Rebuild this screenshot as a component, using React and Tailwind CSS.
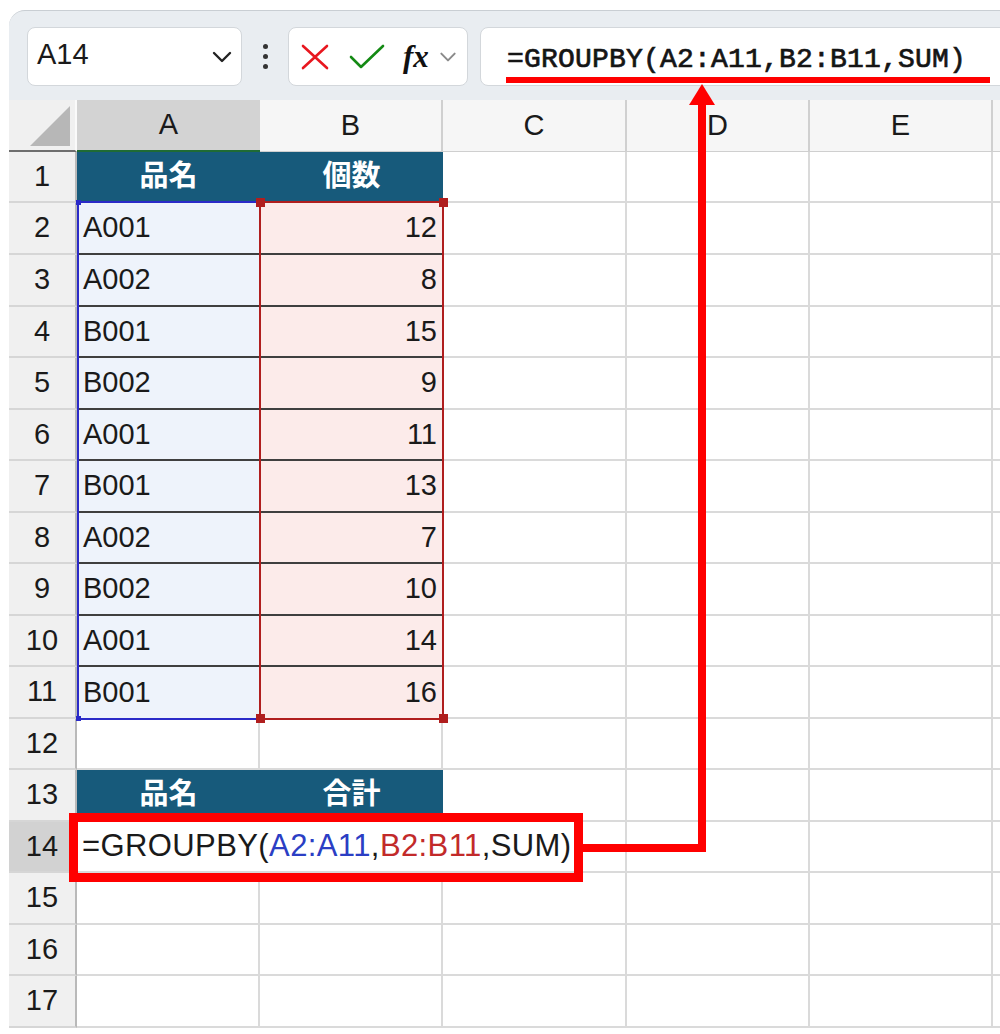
import React from 'react';

const COLS = ['A', 'B', 'C', 'D', 'E'];
const COL_W = [183, 183, 184, 183, 183];
const ROW_H = [51, 52, 52, 51, 52, 51, 52, 51, 52, 51, 52, 51, 52, 51, 52, 51, 52];

const DATA = [
  ['A001', '12'],
  ['A002', '8'],
  ['B001', '15'],
  ['B002', '9'],
  ['A001', '11'],
  ['B001', '13'],
  ['A002', '7'],
  ['B002', '10'],
  ['A001', '14'],
  ['B001', '16'],
];

const SANS = "font-['Liberation_Sans','Noto_Sans_CJK_JP',sans-serif]";

function Chevron({ className }) {
  return (
    <svg viewBox="0 0 20 12" className={className} fill="none" stroke="currentColor" strokeWidth="2.4" strokeLinecap="round" strokeLinejoin="round">
      <path d="M2 2 L10 10 L18 2" />
    </svg>
  );
}

function Toolbar() {
  return (
    <div className="ml-[9px] mt-[10px] h-[90px] bg-[#e9edf1] border-t border-[#c9ced3] rounded-tl-[16px] flex items-start pt-[16px]">
      {/* name box */}
      <div className="ml-[18px] w-[215px] h-[59px] bg-white border border-[#d3d7db] rounded-[8px] flex items-center justify-between pl-[9px] pr-[9px]">
        <span className="text-[29px] text-[#1a1a1a] leading-none -mt-[4px]">A14</span>
        <Chevron className="w-[20px] h-[12px] text-[#222]" />
      </div>
      {/* dots */}
      <div className="w-[46px] h-[59px] flex flex-col items-center justify-center gap-[5px]">
        <span className="w-[5px] h-[5px] rounded-full bg-[#333]" />
        <span className="w-[5px] h-[5px] rounded-full bg-[#333]" />
        <span className="w-[5px] h-[5px] rounded-full bg-[#333]" />
      </div>
      {/* cancel / enter / fx */}
      <div className="w-[180px] h-[59px] bg-white border border-[#d3d7db] rounded-[8px] flex items-center pl-[12px]">
        <svg viewBox="0 0 28 26" className="w-[28px] h-[26px]" stroke="#e8171f" strokeWidth="2.6" strokeLinecap="round">
          <path d="M2 2 L26 24 M26 2 L2 24" />
        </svg>
        <svg viewBox="0 0 36 26" className="ml-[20px] w-[36px] h-[26px]" fill="none" stroke="#148a14" strokeWidth="2.6" strokeLinecap="round" strokeLinejoin="round">
          <path d="M2 13 L12 23 L34 2" />
        </svg>
        <span className="ml-[18px] font-['Liberation_Serif',serif] italic font-bold text-[31px] leading-none text-[#111]">fx</span>
        <Chevron className="ml-[10px] w-[18px] h-[10px] text-[#8a8a8a]" />
      </div>
      {/* formula bar */}
      <div className="ml-[12px] flex-1 -mr-[20px] h-[59px] bg-white border border-[#d3d7db] rounded-[8px] flex items-center pl-[26px] pt-[6px]">
        <span className="font-['Liberation_Mono',monospace] text-[28px] leading-none text-[#151515] tracking-[0.2px] [-webkit-text-stroke:0.7px_#151515]">
          =GROUPBY(A2:A11,B2:B11,SUM)
        </span>
      </div>
    </div>
  );
}

function ColumnHeaders() {
  return (
    <div className="ml-[9px] flex h-[52px]">
      <div className="w-[68px] h-full bg-[#f0f0f0] border-b-2 border-[#6e6e6e] border-r-2 border-r-[#fafafa] flex items-end justify-end pr-[5px] pb-[4px]">
        <div className="w-[40px] h-[40px] bg-[#b7b7b7] [clip-path:polygon(100%_0,100%_100%,0_100%)]" />
      </div>
      {COLS.map((c, i) => (
        <div
          key={c}
          style={{ width: COL_W[i] }}
          className={
            i === 0
              ? 'h-full bg-[#d3d3d3] border-b-2 border-[#1f6b34] flex items-center justify-center text-[29px] text-[#1a1a1a]'
              : 'h-full bg-[#f6f6f6] border-r-2 border-[#d0d0d0] border-b border-b-[#cfcfcf] flex items-center justify-center text-[29px] text-[#1a1a1a]'
          }
        >
          {c}
        </div>
      ))}
      <div className="flex-1 h-full bg-[#f6f6f6] border-b border-[#cfcfcf]" />
    </div>
  );
}

function Row({ n, h }) {
  const isHead = n === 1 || n === 13;
  const isData = n >= 2 && n <= 11;
  const selected = n === 14;
  const d = isData ? DATA[n - 2] : null;
  const headText = n === 1 ? ['品名', '個数'] : ['品名', '合計'];

  return (
    <div className="ml-[9px] flex" style={{ height: h }}>
      <div
        className={`w-[68px] h-full border-b-2 border-r-2 border-b-[#d6d6d6] border-r-[#b9b9b9] flex items-center justify-center text-[29px] text-[#1a1a1a] ${
          selected ? 'bg-[#d2d2d2]' : 'bg-[#f0f0f0]'
        }`}
      >
        {n}
      </div>

      {isHead && (
        <>
          <div className="w-[183px] h-full bg-[#175a7b] border-b-2 border-[#175a7b] flex items-center justify-center text-white font-bold text-[29px]">
            {headText[0]}
          </div>
          <div className="w-[183px] h-full bg-[#175a7b] border-b-2 border-[#175a7b] flex items-center justify-center text-white font-bold text-[29px]">
            {headText[1]}
          </div>
        </>
      )}

      {isData && (
        <>
          <div className={`w-[183px] h-full bg-[#eef3fb] flex items-center pl-[6px] text-[29px] text-[#1a1a1a] ${n < 11 ? 'border-b-2 border-[#3f3f3f]' : ''}`}>
            {d[0]}
          </div>
          <div className={`w-[183px] h-full bg-[#fcebea] flex items-center justify-end pr-[6px] text-[29px] text-[#1a1a1a] ${n < 11 ? 'border-b-2 border-[#3f3f3f]' : ''}`}>
            {d[1]}
          </div>
        </>
      )}

      {selected && (
        <div className="w-[550px] h-full border-b-2 border-r-2 border-[#dadada] flex items-center pl-[5px] text-[31px] tracking-[0.4px] text-[#1a1a1a] whitespace-nowrap">
          <span>=GROUPBY(</span>
          <span className="text-[#2b3ec4]">A2:A11</span>
          <span>,</span>
          <span className="text-[#c22a2a]">B2:B11</span>
          <span>,SUM)</span>
        </div>
      )}

      {!isHead && !isData && !selected && (
        <>
          <div className="w-[183px] h-full border-b-2 border-r-2 border-[#dadada]" />
          <div className="w-[183px] h-full border-b-2 border-r-2 border-[#dadada]" />
        </>
      )}

      {!selected &&
        COL_W.slice(2).map((w, i) => (
          <div key={i} style={{ width: w }} className="h-full border-b-2 border-r-2 border-[#dadada]" />
        ))}
      {selected &&
        COL_W.slice(3).map((w, i) => (
          <div key={i} style={{ width: w }} className="h-full border-b-2 border-r-2 border-[#dadada]" />
        ))}
      <div className="flex-1 h-full border-b-2 border-[#dadada]" />
    </div>
  );
}

export default function App() {
  return (
    <div className={`relative w-[1000px] h-[1034px] bg-white overflow-hidden ${SANS}`}>
      <Toolbar />
      <ColumnHeaders />
      {ROW_H.map((h, i) => (
        <Row key={i} n={i + 1} h={h} />
      ))}

      {/* range highlight A2:A11 */}
      <div className="absolute left-[77px] top-[201px] w-[184px] h-[519px] border-2 border-[#2a2ac8] pointer-events-none" />
      <div className="absolute left-[76px] top-[200px] w-[5px] h-[5px] bg-[#2a2ac8]" />
      <div className="absolute left-[76px] top-[716px] w-[5px] h-[5px] bg-[#2a2ac8]" />

      {/* range highlight B2:B11 */}
      <div className="absolute left-[259px] top-[201px] w-[185px] h-[519px] border-2 border-[#b01e1e] pointer-events-none" />
      <div className="absolute left-[256px] top-[198px] w-[9px] h-[9px] bg-[#b01e1e]" />
      <div className="absolute left-[439px] top-[198px] w-[9px] h-[9px] bg-[#b01e1e]" />
      <div className="absolute left-[256px] top-[714px] w-[9px] h-[9px] bg-[#b01e1e]" />
      <div className="absolute left-[439px] top-[714px] w-[9px] h-[9px] bg-[#b01e1e]" />

      {/* annotation: box around A14 */}
      <div className="absolute left-[69px] top-[813px] w-[514px] h-[69px] border-[9px] border-[#ff0000]" />

      {/* annotation: connector and arrow */}
      <svg className="absolute left-0 top-0 w-[1000px] h-[1034px] pointer-events-none" viewBox="0 0 1000 1034">
        <rect x="506" y="77" width="484" height="6" fill="#ff0000" />
        <polyline points="580,848 702,848 702,100" fill="none" stroke="#ff0000" strokeWidth="8" strokeLinejoin="miter" />
        <polygon points="702,84 689,105 715,105" fill="#ff0000" />
      </svg>
    </div>
  );
}
